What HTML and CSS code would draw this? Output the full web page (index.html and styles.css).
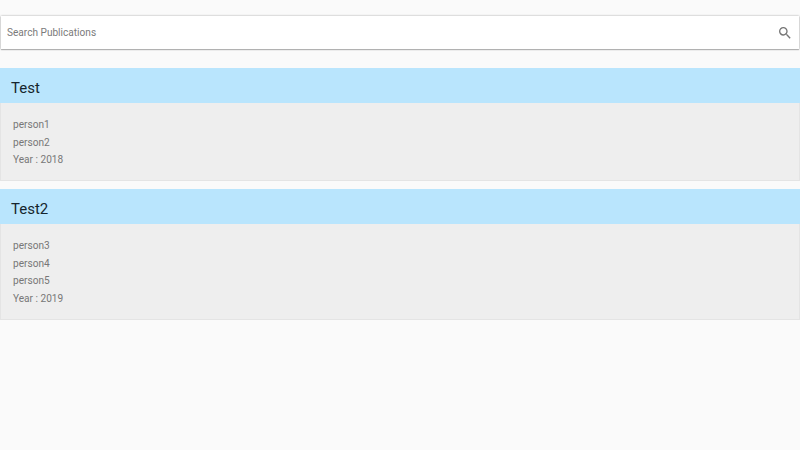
FILE: index.html
```html
<!DOCTYPE html>
<html lang="en">
<head>
    <meta charset="UTF-8">
    <title>Publications</title>
    <link rel="stylesheet" href="styles.css">
</head>
<body>
    <div class="search-bar">
        <input class="search-input" type="text" placeholder="Search Publications">
        <svg class="search-icon" viewBox="0 0 24 24" width="16" height="16">
            <path d="M15.5 14h-.79l-.28-.27A6.47 6.47 0 0 0 16 9.5 6.5 6.5 0 1 0 9.5 16c1.61 0 3.09-.59 4.23-1.57l.27.28v.79l5 4.99L20.49 19l-4.99-5zm-6 0C7.01 14 5 11.99 5 9.5S7.01 5 9.5 5 14 7.01 14 9.5 11.99 14 9.5 14z"/>
        </svg>
    </div>
    <div class="publication">
        <div class="publication-title">Test</div>
        <div class="publication-body">
            <p>person1</p>
            <p>person2</p>
            <p>Year : 2018</p>
        </div>
    </div>
    <div class="publication">
        <div class="publication-title">Test2</div>
        <div class="publication-body">
            <p>person3</p>
            <p>person4</p>
            <p>person5</p>
            <p>Year : 2019</p>
        </div>
    </div>
</body>
</html>
```
FILE: styles.css
```css
body {
    font-family: 'Roboto', sans-serif;
    margin: 0;
    padding: 16px 0 0;
    background: #fafafa;
}

.search-bar {
    display: flex;
    align-items: center;
    height: 33px;
    margin: 0 1px 19px;
    padding: 0 6px 0 6px;
    background: white;
    box-shadow: 0 1px 1px rgba(0, 0, 0, 0.2), 0 0 2px rgba(0, 0, 0, 0.35);
}

.search-input {
    flex: 1;
    padding: 0;
    border: none;
    outline: none;
    background: transparent;
    font-family: 'Roboto', sans-serif;
    font-size: 10.1px;
    color: #757575;
}

.search-input::placeholder {
    color: #7b7b7b;
    opacity: 1;
}

.search-icon {
    fill: #757575;
}

.publication {
    margin-bottom: 8px;
}

.publication-title {
    height: 35px;
    padding: 0 11px;
    background: #b9e5fd;
    font-size: 15px;
    line-height: 41px;
    color: #16252e;
}

.publication-body {
    padding: 13px 12px 11.5px;
    background: #eeeeee;
    border: 1px solid #e4e4e4;
    border-top: none;
    font-size: 10.1px;
    color: #777777;
}

.publication-body p {
    margin: 0;
    line-height: 17.5px;
}
```
